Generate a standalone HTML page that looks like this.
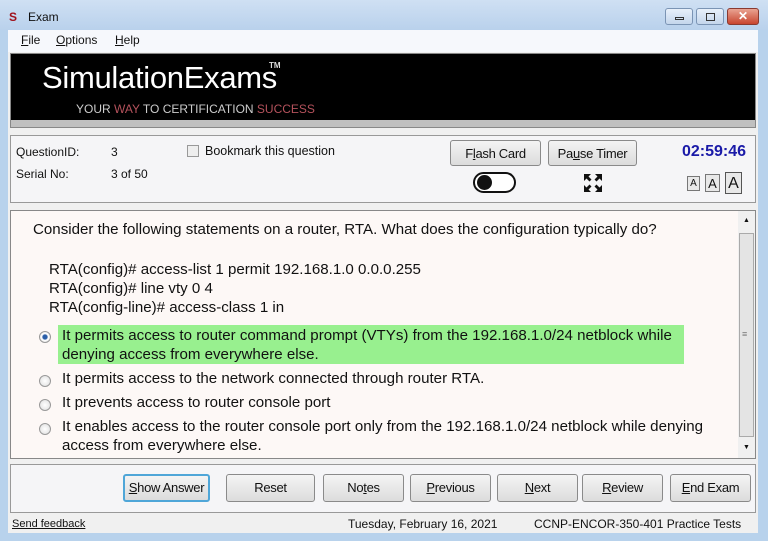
<!DOCTYPE html>
<html><head><meta charset="utf-8"><style>
*{margin:0;padding:0;box-sizing:border-box}
body{width:768px;height:541px;position:relative;overflow:hidden;font-family:"Liberation Sans",sans-serif;background:#b8d2ec;color:#111}
.a{position:absolute}
.btn{position:absolute;border:1px solid #8a8a8a;border-radius:3px;background:linear-gradient(#f4f4f4,#dcdcdc);font-size:13px;text-align:center;line-height:25px;color:#111;letter-spacing:-0.3px}
.rad{position:absolute;width:12px;height:12px;border-radius:50%;border:1px solid #999;background:radial-gradient(#fff,#ddd)}
.t{font-size:15.1px;position:absolute;white-space:nowrap}
</style></head><body>
<div class="a" style="left:0;top:0;width:768px;height:30px;background:linear-gradient(#cfe0f3,#b9d1ec)"></div>
<div class="a" style="left:9px;top:10px;font-weight:bold;color:#a0101a;font-size:12px">S</div>
<div class="a" style="left:28px;top:10px;font-size:12px">Exam</div>
<div class="a" style="left:665px;top:8px;width:28px;height:17px;border:1px solid #7b94b4;border-radius:3px;background:linear-gradient(#e8f0fa,#c4d6ec)"><div class="a" style="left:9px;top:8px;width:9px;height:3px;border:1px solid #333"></div></div>
<div class="a" style="left:696px;top:8px;width:28px;height:17px;border:1px solid #7b94b4;border-radius:3px;background:linear-gradient(#e8f0fa,#c4d6ec)"><div class="a" style="left:9px;top:4px;width:9px;height:8px;border:1px solid #333"></div></div>
<div class="a" style="left:727px;top:8px;width:32px;height:17px;border:1px solid #8a3a30;border-radius:3px;background:linear-gradient(#e9a392,#c8452f);color:#fff;font-size:12px;font-weight:bold;text-align:center;line-height:15px">✕</div>
<div class="a" style="left:8px;top:30px;width:750px;height:503px;background:#f0f0f0"></div>
<div class="a" style="left:8px;top:30px;width:750px;height:22px;background:#f6f8fc;font-size:12px"><span class="a" style="left:13px;top:3px"><u>F</u>ile</span><span class="a" style="left:48px;top:3px"><u>O</u>ptions</span><span class="a" style="left:107px;top:3px"><u>H</u>elp</span></div>
<div class="a" style="left:10px;top:53px;width:746px;height:75px;background:#c0c0c0;border:1px solid #888"></div>
<div class="a" style="left:11px;top:54px;width:744px;height:66px;background:#000"></div>
<div class="a" style="left:42px;top:60px;color:#fff;font-size:31px;letter-spacing:-0.3px">SimulationExams</div>
<div class="a" style="left:269px;top:61px;color:#ddd;font-size:8px;font-weight:bold">TM</div>
<div class="a" style="left:76px;top:102px;color:#ccc;font-size:12px">YOUR <span style="color:#b5525c">WAY</span> TO CERTIFICATION <span style="color:#b5525c">SUCCESS</span></div>
<div class="a" style="left:10px;top:135px;width:746px;height:68px;border:1px solid #999;background:#f5f5f7"></div>
<div class="a" style="left:16px;top:145px;font-size:12px">QuestionID:</div>
<div class="a" style="left:111px;top:145px;font-size:12px">3</div>
<div class="a" style="left:16px;top:167px;font-size:12px">Serial No:</div>
<div class="a" style="left:111px;top:167px;font-size:12px">3 of 50</div>
<div class="a" style="left:187px;top:145px;width:12px;height:12px;border:1px solid #999;background:#eee"></div>
<div class="a" style="left:205px;top:144px;font-size:12.5px">Bookmark this question</div>
<div class="btn" style="left:450px;top:140px;width:91px;height:26px">F<u>l</u>ash Card</div>
<div class="btn" style="left:548px;top:140px;width:89px;height:26px">Pa<u>u</u>se Timer</div>
<div class="a" style="left:682px;top:143px;font-size:16px;font-weight:bold;color:#1a1aa8">02:59:46</div>
<div class="a" style="left:473px;top:172px;width:43px;height:21px;border:2px solid #111;border-radius:11px;background:#fff"><div class="a" style="left:2px;top:1px;width:15px;height:15px;border-radius:50%;background:#111"></div></div>
<svg class="a" style="left:583px;top:173px" width="20" height="20" viewBox="0 0 20 20"><g fill="#111"><path d="M1 1h7l-2.5 2.5 3 3-2 2-3-3L1 8z"/><path d="M19 1h-7l2.5 2.5-3 3 2 2 3-3L19 8z"/><path d="M1 19h7l-2.5-2.5 3-3-2-2-3 3L1 12z"/><path d="M19 19h-7l2.5-2.5-3-3 2-2 3 3L19 12z"/></g></svg>
<div class="a" style="left:687px;top:176px;width:13px;height:15px;border:1px solid #777;background:#e8e8e8;font-size:10px;text-align:center;line-height:14px">A</div>
<div class="a" style="left:705px;top:174px;width:15px;height:18px;border:1px solid #777;background:#e8e8e8;font-size:13px;text-align:center;line-height:17px">A</div>
<div class="a" style="left:725px;top:172px;width:17px;height:22px;border:1px solid #555;background:#e8e8e8;font-size:16px;text-align:center;line-height:21px">A</div>
<div class="a" style="left:10px;top:210px;width:746px;height:249px;border:1px solid #888;background:#fdf8f6"></div>
<div class="a" style="left:738px;top:211px;width:17px;height:247px;background:#f0f0f0"><div class="a" style="left:1px;top:22px;width:15px;height:204px;border:1px solid #aaa;background:#e4e4e4"></div><div class="a" style="left:5px;top:6px;font-size:7px">▲</div><div class="a" style="left:5px;top:233px;font-size:7px">▼</div><div class="a" style="left:4px;top:118px;font-size:9px;color:#777">≡</div></div>
<div class="t" style="left:33px;top:221px">Consider the following statements on a router, RTA. What does the configuration typically do?</div>
<div class="t" style="left:49px;top:261px">RTA(config)# access-list 1 permit 192.168.1.0 0.0.0.255</div>
<div class="t" style="left:49px;top:280px">RTA(config)# line vty 0 4</div>
<div class="t" style="left:49px;top:299px">RTA(config-line)# access-class 1 in</div>
<div class="a" style="left:58px;top:325px;width:626px;height:39px;background:#98f08f"></div>
<div class="rad" style="left:39px;top:331px;background:radial-gradient(#2a5ea8 30%,#fff 45%,#ddd)"></div>
<div class="t" style="left:62px;top:327px">It permits access to router command prompt (VTYs) from the 192.168.1.0/24 netblock while</div>
<div class="t" style="left:62px;top:346px">denying access from everywhere else.</div>
<div class="rad" style="left:39px;top:375px"></div>
<div class="t" style="left:62px;top:370px">It permits access to the network connected through router RTA.</div>
<div class="rad" style="left:39px;top:399px"></div>
<div class="t" style="left:62px;top:394px">It prevents access to router console port</div>
<div class="rad" style="left:39px;top:423px"></div>
<div class="t" style="left:62px;top:418px">It enables access to the router console port only from the 192.168.1.0/24 netblock while denying</div>
<div class="t" style="left:62px;top:437px">access from everywhere else.</div>
<div class="a" style="left:10px;top:464px;width:746px;height:49px;border:1px solid #999;background:#f5f5f7"></div>
<div class="btn" style="left:123px;top:474px;width:87px;height:28px;border:2px solid #4fa6d8;line-height:24px"><u>S</u>how Answer</div>
<div class="btn" style="left:226px;top:474px;width:89px;height:28px">Reset</div>
<div class="btn" style="left:323px;top:474px;width:81px;height:28px">No<u>t</u>es</div>
<div class="btn" style="left:410px;top:474px;width:81px;height:28px"><u>P</u>revious</div>
<div class="btn" style="left:497px;top:474px;width:81px;height:28px"><u>N</u>ext</div>
<div class="btn" style="left:582px;top:474px;width:81px;height:28px"><u>R</u>eview</div>
<div class="btn" style="left:670px;top:474px;width:81px;height:28px"><u>E</u>nd Exam</div>
<div class="a" style="left:12px;top:518px;font-size:11px;text-decoration:underline">Send feedback</div>
<div class="a" style="left:348px;top:517px;font-size:12px">Tuesday, February 16, 2021</div>
<div class="a" style="left:534px;top:517px;font-size:12px">CCNP-ENCOR-350-401 Practice Tests</div>
</body></html>
